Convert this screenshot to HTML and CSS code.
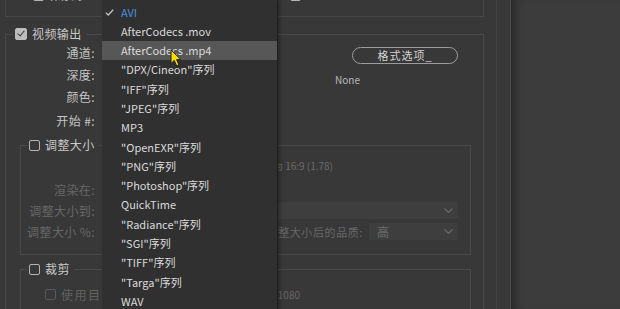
FILE: index.html
```html
<!DOCTYPE html>
<html>
<head>
<title>渲染设置</title>
<meta charset="utf-8">
<link rel="stylesheet" href="styles.css">
</head>
<body>

<div class="app">
    <div class="panel">
        <div class="content">
            <div class="top-box">
                <div class="top-row">
                    <span class="cb"></span><span class="top-text">保存到</span>
                    <span class="cb stretch-cb"></span><span class="top-text">Stretch to Fill Position</span>
                </div>
            </div>

            <fieldset class="group video">
                <legend><span class="cb checked"></span>视频输出</legend>
                <div class="video-body">
                    <div class="labels">
                        <div class="label-row">通道:</div>
                        <div class="label-row">深度:</div>
                        <div class="label-row">颜色:</div>
                        <div class="label-row tall">开始 #:</div>
                    </div>
                    <div class="details">
                        <button class="format-btn" type="button">格式选项_</button>
                        <div class="codec">None</div>
                    </div>
                </div>

                <fieldset class="group inner resize">
                    <legend><span class="cb"></span>调整大小</legend>
                    <div class="lock-row"><span>锁定长宽比为 16:9 (1.78)</span></div>
                    <div class="dim-row">
                        <span class="dim-label">渲染在:</span>
                    </div>
                    <div class="dim-row">
                        <span class="dim-label">调整大小到:</span>
                        <div class="select wide"><span></span><svg class="chev" width="9" height="5" viewBox="0 0 9 5"><polyline points="0.5,0.5 4.5,4.5 8.5,0.5"/></svg></div>
                    </div>
                    <div class="dim-row">
                        <span class="dim-label">调整大小 %:</span>
                        <span class="quality-label">调整大小后的品质:</span>
                        <div class="select narrow"><span>高</span><svg class="chev" width="9" height="5" viewBox="0 0 9 5"><polyline points="0.5,0.5 4.5,4.5 8.5,0.5"/></svg></div>
                    </div>
                </fieldset>

                <fieldset class="group inner crop">
                    <legend><span class="cb"></span>裁剪</legend>
                    <div class="crop-row">
                        <span class="cb dim"></span><span class="dim-text">使用目标区域</span>
                        <span class="final-size">最终大小: 1920 x 1080</span>
                    </div>
                </fieldset>
            </fieldset>
        </div>
        <div class="track"></div>
    </div>
    <div class="side"></div>

    <div class="menu">
        <div class="item selected"><svg class="tick" width="9" height="7" viewBox="0 0 9 7"><polyline points="0.8,3.6 3.2,6 8.2,0.8"/></svg>AVI</div>
        <div class="item">AfterCodecs .mov</div>
        <div class="item hover">AfterCodecs .mp4</div>
        <div class="item">"DPX/Cineon"序列</div>
        <div class="item">"IFF"序列</div>
        <div class="item">"JPEG"序列</div>
        <div class="item">MP3</div>
        <div class="item">"OpenEXR"序列</div>
        <div class="item">"PNG"序列</div>
        <div class="item">"Photoshop"序列</div>
        <div class="item">QuickTime</div>
        <div class="item">"Radiance"序列</div>
        <div class="item">"SGI"序列</div>
        <div class="item">"TIFF"序列</div>
        <div class="item">"Targa"序列</div>
        <div class="item">WAV</div>
    </div>

    <svg class="cursor" width="12" height="18" viewBox="0 0 12 18">
        <path d="M1 1 L1 14.5 L4.2 11.4 L6.6 16.8 L8.9 15.8 L6.6 10.6 L11 10.6 Z"/>
    </svg>
</div>

</body>
</html>
```

FILE: styles.css
```css
body {
    margin: 0;
    background-color: #383838;
    font-family: "Noto Sans CJK SC", "Noto Sans", sans-serif;
    color: #c4c4c4;
    overflow: hidden;
}
.app {
    position: relative;
    display: flex;
    width: 620px;
    height: 309px;
    overflow: hidden;
}
.panel {
    display: flex;
    width: 511px;
    flex-shrink: 0;
    background-color: #383838;
}
.content {
    padding-left: 5px;
    width: 479px;
}
.track {
    margin-left: 12px;
    width: 13px;
    border-left: 1px solid #444;
    border-right: 1px solid #4a4a4a;
}
.side {
    flex: 1;
    background-color: #3c3c3c;
    box-shadow: inset 10px 0 10px -6px rgba(0, 0, 0, 0.35);
}

/* checkboxes */
.cb {
    display: inline-block;
    box-sizing: border-box;
    width: 11px;
    height: 11px;
    border: 1.5px solid #b4b4b4;
    border-radius: 2px;
    vertical-align: middle;
    position: relative;
    flex-shrink: 0;
}
.cb.checked {
    width: 12px;
    height: 12px;
    background-color: #bdbdbd;
    border-color: #bdbdbd;
}
.cb.checked::after {
    content: "";
    position: absolute;
    left: 3px;
    top: 0px;
    width: 3px;
    height: 6px;
    border: solid #3a3a3a;
    border-width: 0 1.6px 1.6px 0;
    transform: rotate(40deg);
}
.cb.dim {
    border-color: #595959;
}

/* top group, mostly scrolled off */
.top-box {
    height: 28px;
    margin-top: -12px;
    border: 1px solid #474747;
    border-top: none;
    box-sizing: content-box;
}
.top-row {
    display: flex;
    align-items: center;
    height: 11px;
    padding-top: 2px;
    padding-left: 27px;
    font-size: 11px;
}
.top-text {
    margin-left: 5px;
    line-height: 11px;
}
.stretch-cb {
    margin-left: 208px;
}

/* group boxes */
.group {
    margin: 0;
    padding: 0;
    border: 1px solid #4a4a4a;
    min-width: 0;
}
.group legend {
    display: flex;
    align-items: center;
    height: 14px;
    line-height: 14px;
    font-size: 12px;
    letter-spacing: 0.4px;
    color: #c8c8c8;
}
.video {
    margin-top: 10px;
    height: 300px;
    border-bottom: none;
}
.video legend {
    margin-left: 7px;
    padding: 0 4px 0 2px;
}
.video legend .cb {
    margin-right: 5px;
}
.video-body {
    display: flex;
    height: 97px;
    padding-top: 1px;
    box-sizing: border-box;
}
.labels {
    width: 89px;
    text-align: right;
    font-size: 12px;
    letter-spacing: 0.4px;
}
.label-row {
    height: 22px;
    line-height: 22px;
}
.label-row.tall {
    height: 24px;
    line-height: 26px;
}
.details {
    margin-left: 240px;
    padding-top: 5px;
}
.format-btn {
    display: block;
    margin-left: 17px;
    width: 106px;
    height: 17px;
    padding: 0;
    border: 1.5px solid #9c9c9c;
    border-radius: 9px;
    background: transparent;
    color: #d2d2d2;
    font-family: inherit;
    font-size: 11px;
    letter-spacing: 1px;
    line-height: 13px;
}
.codec {
    margin-top: 10px;
    font-size: 10px;
    line-height: 12px;
    color: #b8b8b8;
}

/* inner groups */
.inner {
    margin-left: 14px;
    margin-right: 12px;
}
.inner legend {
    margin-left: 6px;
    padding: 0 4px 0 2px;
}
.inner legend .cb {
    margin-right: 5px;
}
.resize {
    padding-bottom: 12px;
}
.lock-row {
    display: flex;
    justify-content: flex-end;
    width: 312px;
    height: 20px;
    margin-top: 4px;
    line-height: 20px;
    font-size: 10px;
    color: #6c6c6c;
    white-space: nowrap;
}
.dim-row {
    display: flex;
    align-items: center;
    height: 21px;
}
.dim-row:nth-child(3) {
    margin-top: 3px;
}
.dim-label {
    width: 74px;
    text-align: right;
    font-size: 12px;
    letter-spacing: 0.4px;
    color: #676767;
    flex-shrink: 0;
}
.quality-label {
    display: flex;
    justify-content: flex-end;
    margin-left: 168px;
    width: 100px;
    flex-shrink: 0;
    font-size: 11px;
    letter-spacing: 0.6px;
    color: #676767;
    white-space: nowrap;
}
.select {
    display: flex;
    align-items: center;
    justify-content: space-between;
    box-sizing: border-box;
    height: 17px;
    padding: 0 5px 0 8px;
    background-color: #3e3e3e;
    font-size: 12px;
    color: #6c6c6c;
    flex-shrink: 0;
}
.select.wide {
    margin-left: 20px;
    width: 343px;
}
.select.narrow {
    margin-left: 6px;
    width: 89px;
}
.chev polyline {
    fill: none;
    stroke: #6a6a6a;
    stroke-width: 1.1;
}
.crop {
    margin-top: 7px;
    height: 60px;
}
.crop-row {
    display: flex;
    align-items: center;
    width: 255px;
    height: 14px;
    margin-top: 11px;
    padding-left: 24px;
}
.dim-text {
    margin-left: 5px;
    font-size: 12px;
    letter-spacing: 1.5px;
    color: #616161;
    white-space: nowrap;
}
.final-size {
    margin-left: auto;
    font-size: 10px;
    color: #676767;
    white-space: nowrap;
}

/* popup menu */
.menu {
    position: absolute;
    left: 102px;
    top: 0;
    width: 175px;
    height: 330px;
    padding-top: 2.5px;
    background-color: #303030;
    border-right: 1px solid #1e1e1e;
    box-shadow: 2px 0 4px rgba(0, 0, 0, 0.3);
}
.item {
    position: relative;
    height: 19.3px;
    line-height: 19.3px;
    padding-left: 19px;
    font-size: 11px;
    color: #dadada;
    white-space: nowrap;
}
.item.selected {
    color: #4a8fdc;
}
.item.hover {
    background-color: #575757;
}
.tick {
    position: absolute;
    left: 3px;
    top: 6px;
}
.tick polyline {
    fill: none;
    stroke: #c4c4c4;
    stroke-width: 1.3;
}
.cursor {
    position: absolute;
    left: 170px;
    top: 49px;
}
.cursor path {
    fill: #f2de00;
    stroke: #222;
    stroke-width: 1;
    stroke-linejoin: round;
}
```
